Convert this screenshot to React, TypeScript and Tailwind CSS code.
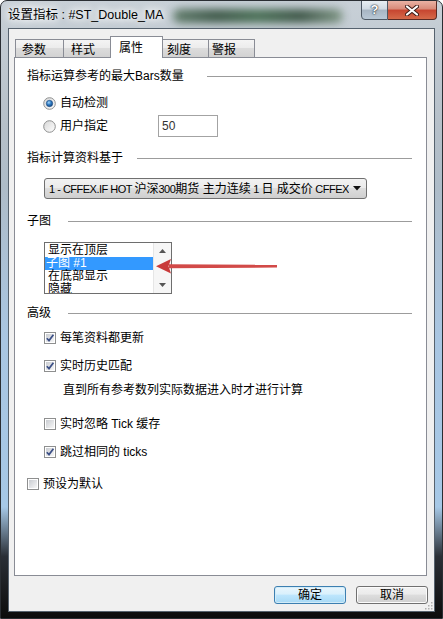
import React from "react";

const ui = '"Liberation Sans", "Noto Sans CJK SC", sans-serif';

function Radio({ on }: { on?: boolean }) {
  return (
    <svg width="13" height="13" viewBox="0 0 13 13" className="shrink-0">
      <defs>
        <linearGradient id="rb" x1="0" y1="0" x2="1" y2="1">
          <stop offset="0" stopColor="#d6d6d6" />
          <stop offset="1" stopColor="#ffffff" />
        </linearGradient>
        <radialGradient id="rd" cx="0.4" cy="0.35" r="0.75">
          <stop offset="0" stopColor="#a8d8fa" />
          <stop offset="0.45" stopColor="#2f7cc4" />
          <stop offset="1" stopColor="#0c3a72" />
        </radialGradient>
      </defs>
      <circle cx="6.5" cy="6.5" r="5.8" fill="url(#rb)" stroke="#8e8f8f" />
      {on && <circle cx="6.5" cy="6.5" r="3.2" fill="url(#rd)" stroke="#1c4a80" strokeWidth="0.6" />}
    </svg>
  );
}

function Check({ on }: { on?: boolean }) {
  return (
    <svg width="12" height="12" viewBox="0 0 12 12" className="shrink-0">
      <defs>
        <linearGradient id="cb" x1="0" y1="0" x2="1" y2="1">
          <stop offset="0" stopColor="#c9ccd1" />
          <stop offset="1" stopColor="#f7f7f7" />
        </linearGradient>
      </defs>
      <rect x="0.5" y="0.5" width="11" height="11" fill="#fff" stroke="#8e8f8f" />
      <rect x="2" y="2" width="8" height="8" fill="url(#cb)" />
      {on && <path d="M2.8 6.2 L5 8.6 L9.4 2.8" fill="none" stroke="#3b4f86" strokeWidth="1.7" />}
    </svg>
  );
}

function Header({ label, w, mt }: { label: string; w: string; mt: string }) {
  return (
    <div className={`flex items-center h-[16px] pl-[12px] pr-[14px] ${mt}`}>
      <span className={`shrink-0 leading-[16px] ${w}`}>{label}</span>
      <div className="flex-1 h-px bg-[#9c9c9c]" />
    </div>
  );
}

function CheckRow({ label, on, mt, pl }: { label: string; on?: boolean; mt: string; pl: string }) {
  return (
    <div className={`flex items-center h-[16px] gap-[4px] ${mt} ${pl}`}>
      <Check on={on} />
      <span className="leading-[16px]">{label}</span>
    </div>
  );
}

function Tab({ label, active, cls }: { label: string; active?: boolean; cls: string }) {
  if (active)
    return (
      <div className={`relative z-10 -mb-px h-[22px] bg-white border-x border-t border-[#898c95] flex items-start pt-[3px] leading-[16px] ${cls}`}>
        {label}
      </div>
    );
  return (
    <div className={`h-[18px] border-x border-t border-[#898c95] bg-[linear-gradient(#f4f4f4,#ececec_45%,#dcdcdc_50%,#d2d2d2)] flex items-start pt-[2px] leading-[16px] ${cls}`}>
      {label}
    </div>
  );
}

function Btn({ label, def }: { label: string; def?: boolean }) {
  return (
    <div
      className={`w-[72px] h-[18px] rounded-[3px] border flex items-center justify-center leading-[16px] ${
        def
          ? "border-[#3c7fb1] bg-[linear-gradient(#eaf6fd,#d9f0fc_45%,#bee6fd_50%,#a7d9f5)] shadow-[inset_0_0_0_1px_#d2ecf8]"
          : "border-[#707070] bg-[linear-gradient(#f2f2f2,#ebebeb_45%,#dddddd_50%,#cfcfcf)] shadow-[inset_0_0_0_1px_#fbfbfb]"
      }`}
    >
      {label}
    </div>
  );
}

export default function App() {
  return (
    <div
      className="w-[443px] h-[619px] relative overflow-hidden rounded-t-[7px] border border-[#2a2e33] bg-[linear-gradient(#c8d0d7,#b6c0c9_20%,#aebcc8_30%,#a9c6e2_55%,#a6c8e6_82%,#2a2f36_90%,#0c0c0c)] flex flex-col px-[7px] pb-[6px] text-[12px] text-black"
      style={{ fontFamily: ui }}
    >
      {/* title bar */}
      <div className="relative h-[27px] flex items-start shrink-0">
        <div className="absolute left-[165px] top-[8px] w-[170px] h-[14px] rounded-full bg-[linear-gradient(90deg,#4a6a52,#1f3d28,#2d5a38,#1e3a26,#6f8a72)] blur-[4px] opacity-80" />
        <div className="relative mt-[6px] ml-[0px] leading-[16px] text-[12.5px] [text-shadow:0_0_6px_#fff,0_0_10px_#fff,0_0_12px_#fff]">
          设置指标 : #ST_Double_MA
        </div>
        <div className="ml-auto -mt-px mr-[-2px] flex h-[20px]">
          <div className="w-[27px] h-full rounded-bl-[4px] border border-[#4d5864] bg-[linear-gradient(#e8eef3,#d0dae3_45%,#a7b5c3_50%,#b9c8d6)] flex items-center justify-center text-white font-bold text-[13px] [text-shadow:0_0_2px_#22303c,0_0_1px_#000]">
            ?
          </div>
          <div className="w-[49px] h-full rounded-br-[4px] border border-l-0 border-[#5a2a24] bg-[linear-gradient(#eab2a4,#d88a78_45%,#c74530_50%,#d56a4a)] flex items-center justify-center">
            <svg width="14" height="11" viewBox="0 0 14 11">
              <path d="M2 1.5 L12 9.5 M12 1.5 L2 9.5" stroke="#3b1b16" strokeWidth="4" strokeLinecap="round" />
              <path d="M2 1.5 L12 9.5 M12 1.5 L2 9.5" stroke="#fff" strokeWidth="2.2" strokeLinecap="round" />
            </svg>
          </div>
        </div>
      </div>

      {/* client */}
      <div className="relative flex-1 border border-[#56626e] bg-[#f0f0f0] flex flex-col">
        <div className="flex items-end pt-[7px] pl-[6px]">
          <Tab label="参数" cls="w-[49px] pl-[6px]" />
          <Tab label="样式" cls="-ml-px w-[48px] pl-[7px]" />
          <Tab label="属性" active cls="-ml-px w-[53px] pl-[8px]" />
          <Tab label="刻度" cls="-ml-px w-[47px] pl-[4px]" />
          <Tab label="警报" cls="-ml-px w-[47px] pl-[3px]" />
        </div>

        <div className="relative ml-[5px] w-[413px] h-[519px] bg-white border border-[#898c95] flex flex-col">
          <Header label="指标运算参考的最大Bars数量" w="w-[180px]" mt="mt-[10px]" />

          <div className="flex items-center h-[16px] mt-[11px] pl-[28px] gap-[4px]">
            <Radio on />
            <span className="leading-[16px]">自动检测</span>
          </div>
          <div className="flex items-center h-[22px] mt-[4px] pl-[28px]">
            <Radio />
            <span className="ml-[4px] w-[98px] leading-[16px]">用户指定</span>
            <div className="w-[60px] h-[22px] border border-[#a3a3a3] flex items-center pl-[3px] leading-[16px] text-[#333]">
              50
            </div>
          </div>

          <Header label="指标计算资料基于" w="w-[110px]" mt="mt-[13px]" />

          <div className="mt-[12px] ml-[29px] w-[323px] h-[21px] rounded-[3px] border border-[#707070] bg-[linear-gradient(#f2f2f2,#ebebeb_45%,#dddddd_50%,#cfcfcf)] flex items-center pl-[4px] pr-[5px]">
            <span className="flex-1 overflow-hidden whitespace-nowrap leading-[16px]">
              <span className="text-[11px] tracking-[-0.5px]">1 - CFFEX.IF HOT </span>沪深
              <span className="text-[11px] tracking-[-0.5px]">300</span>期货 主力连续
              <span className="text-[11px] tracking-[-0.5px]"> 1 </span>日 成交价
              <span className="text-[11px] tracking-[-0.5px]"> CFFEX.IF</span>
            </span>
            <svg width="8" height="5" viewBox="0 0 8 5" className="ml-[4px] shrink-0">
              <path d="M0 0 H8 L4 4.5 Z" fill="#111" />
            </svg>
          </div>

          <Header label="子图" w="w-[41px]" mt="mt-[14px]" />

          <div className="mt-[13px] ml-[29px] w-[128px] h-[52px] border border-[#6e6e6e] flex overflow-hidden">
            <div className="flex-1 flex flex-col pt-px leading-[13px]">
              <div className="h-[13px] pl-[3px]">显示在顶层</div>
              <div className="h-[13px] pl-[1px] bg-[#3399ff] text-white">子图 #1</div>
              <div className="h-[13px] pl-[3px]">在底部显示</div>
              <div className="h-[13px] pl-[3px]">隐藏</div>
            </div>
            <div className="w-[18px] bg-[#f6f6f6] border-l border-[#e6e6e6] flex flex-col items-center justify-between py-[6px]">
              <svg width="7" height="4" viewBox="0 0 7 4">
                <path d="M0 4 L3.5 0 L7 4 Z" fill="#555" />
              </svg>
              <svg width="7" height="4" viewBox="0 0 7 4">
                <path d="M0 0 L3.5 4 L7 0 Z" fill="#555" />
              </svg>
            </div>
          </div>

          <svg className="absolute left-[140px] top-[200px]" width="125" height="16" viewBox="0 0 125 16">
            <path d="M14 6.2 L122 6.8 L122 9.6 L14 10.2 Z" fill="#d24a48" />
            <path d="M1 8.3 L16 1 L13.5 8.3 L16 15.5 Z" fill="#c93a3a" />
          </svg>

          <Header label="高级" w="w-[41px]" mt="mt-[11px]" />

          <CheckRow label="每笔资料都更新" on mt="mt-[9px]" pl="pl-[29px]" />
          <CheckRow label="实时历史匹配" on mt="mt-[12px]" pl="pl-[29px]" />
          <div className="h-[16px] mt-[8px] pl-[48px] leading-[16px]">直到所有参考数列实际数据进入时才进行计算</div>
          <CheckRow label="实时忽略 Tick 缓存" mt="mt-[18px]" pl="pl-[29px]" />
          <CheckRow label="跳过相同的 ticks" on mt="mt-[12px]" pl="pl-[29px]" />
          <CheckRow label="预设为默认" mt="mt-[16px]" pl="pl-[12px]" />
        </div>

        <div className="mt-[10px] flex justify-end gap-[10px] pr-[6px]">
          <Btn label="确定" def />
          <Btn label="取消" />
        </div>

        <svg className="absolute right-[1px] bottom-[1px]" width="8" height="8" viewBox="0 0 8 8">
          <g fill="#b0b0b0">
            <rect x="6" y="0" width="1.5" height="1.5" />
            <rect x="3" y="3" width="1.5" height="1.5" />
            <rect x="6" y="3" width="1.5" height="1.5" />
            <rect x="0" y="6" width="1.5" height="1.5" />
            <rect x="3" y="6" width="1.5" height="1.5" />
            <rect x="6" y="6" width="1.5" height="1.5" />
          </g>
        </svg>
      </div>
    </div>
  );
}
